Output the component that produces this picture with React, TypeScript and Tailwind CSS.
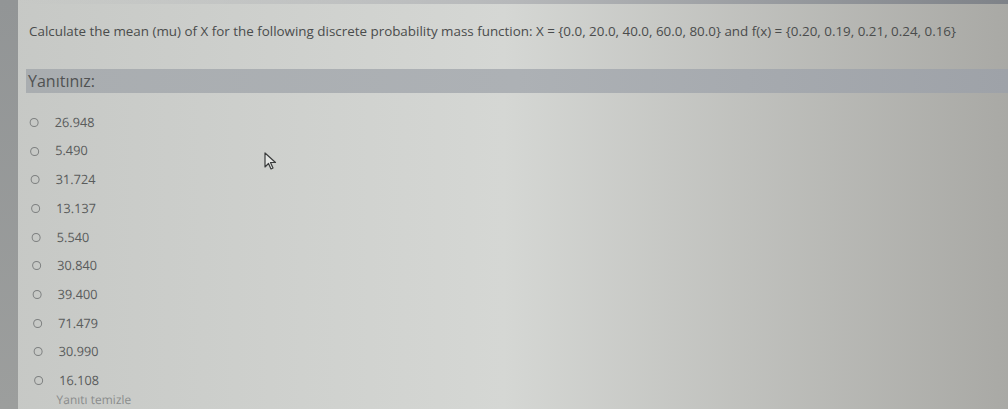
import React from "react";

const options = ["26.948", "5.490", "31.724", "13.137", "5.540", "30.840", "39.400", "71.479", "30.990", "16.108"];

export default function App() {
  return (
    <div
      className="relative flex h-[409px] w-[1008px] overflow-hidden bg-linear-to-r from-[#c6c8c5] via-[#d5d7d4] to-[#a9a9a5] text-[#4a4c4c]"
      style={{ fontFamily: '"Open Sans", "Noto Sans", sans-serif' }}
    >
      <div className="w-[18px] shrink-0 bg-linear-to-b from-[#929596] to-[#9c9e9d]" />
      <div className="flex min-w-0 flex-1 flex-col">
        <div className="h-[4px] bg-linear-to-r from-transparent via-[#b6b8ba] to-[#7e8288]" />
        <div className="pl-[11px] pt-[18px] text-[13.4px] leading-[19px] whitespace-nowrap">
          Calculate the mean (mu) of X for the following discrete probability mass function: X = {"{"}0.0, 20.0, 40.0, 60.0, 80.0{"}"} and f(x) = {"{"}0.20, 0.19, 0.21, 0.24, 0.16{"}"}
        </div>
        <div className="mt-[28px] ml-[8px] flex h-[27px] items-center bg-linear-to-r from-[#a9adb0] via-[#adb1b5] to-[#9ea2a8] pl-[2px] text-[16px] text-[#505252]">
          Yanıtınız:
        </div>
        <div className="mt-[15px] flex skew-x-1 flex-col pl-[14px]">
          {options.map((o) => (
            <div key={o} className="flex h-[28.7px] items-center gap-[16px] text-[12.8px] text-[#5a5c5c]">
              <span className="block h-[9px] w-[9px] rounded-full border border-[#7e8080]" />
              <span>{o}</span>
            </div>
          ))}
          <div className="-mt-[4px] pl-[22px] text-[12px] text-[#8a8c8c]">Yanıtı temizle</div>
        </div>
      </div>
      <svg className="absolute left-[264px] top-[152px]" width="14" height="20" viewBox="0 0 14 20">
        <path d="M1 1 L1 15 L4.5 11.5 L7 17 L9 16 L6.5 10.5 L11.5 10.5 Z" fill="#e4e6e4" stroke="#3a3c3c" strokeWidth="1.2" strokeLinejoin="round" />
      </svg>
    </div>
  );
}
